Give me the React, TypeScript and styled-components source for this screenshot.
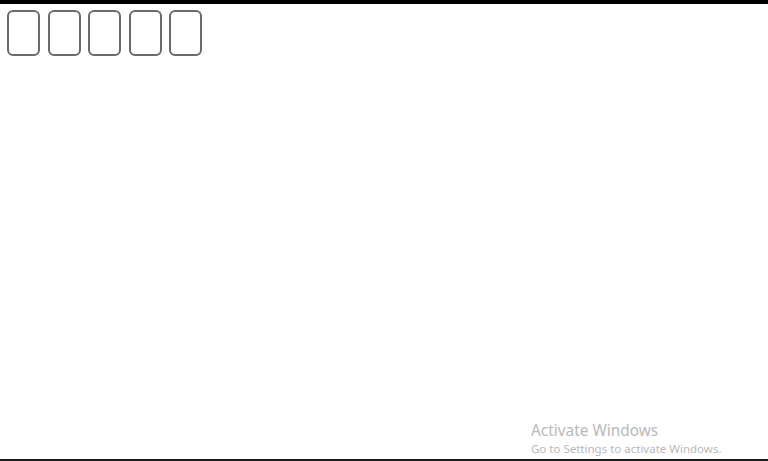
import { FC } from 'react'
import styled, { createGlobalStyle } from 'styled-components'

const GlobalStyle = createGlobalStyle`
  html, body, #root {
    margin: 0;
    padding: 0;
    height: 100%;
  }

  body {
    background: #ffffff;
    font-family: 'Noto Sans', 'Open Sans', sans-serif;
    overflow: hidden;
  }
`

const SLOT_COUNT = 5

const App: FC = () => {
  return (
    <>
      <GlobalStyle />
      <Page>
        <TopBar />
        <Main>
          <SlotRow>
            {Array.from({ length: SLOT_COUNT }).map((_, i) => (
              <Slot key={i} />
            ))}
          </SlotRow>
        </Main>
        <BottomBar />
        <Watermark>
          <WatermarkTitle>Activate Windows</WatermarkTitle>
          <WatermarkNote>Go to Settings to activate Windows.</WatermarkNote>
        </Watermark>
      </Page>
    </>
  )
}

const Page = styled.div`
  position: relative;
  height: 100vh;
  display: flex;
  flex-direction: column;
`

const TopBar = styled.div`
  height: 4px;
  background-color: #000000;
  flex-shrink: 0;
`

const Main = styled.div`
  flex: 1;
  padding: 6px 0 0 7px;
`

const SlotRow = styled.div`
  display: flex;
  gap: 7.25px;
`

const Slot = styled.div`
  width: 29.3px;
  height: 41.5px;
  border: 2px solid #6b6b6b;
  border-radius: 6px;
  background-color: #ffffff;
`

const BottomBar = styled.div`
  height: 2px;
  background-color: #1a1a1a;
  flex-shrink: 0;
`

const Watermark = styled.div`
  position: absolute;
  left: 531px;
  top: 421px;
  display: flex;
  flex-direction: column;
  color: #b9b9b9;
  pointer-events: none;
`

const WatermarkTitle = styled.div`
  font-size: 15.4px;
  line-height: 20px;
`

const WatermarkNote = styled.div`
  font-size: 11.5px;
  line-height: 16px;
  margin-top: 0;
`

export default App
